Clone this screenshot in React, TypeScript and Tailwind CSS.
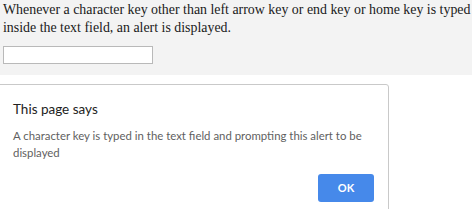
import React from "react";

export default function App() {
  return (
    <div className="relative w-[474px] h-[209px] bg-white overflow-hidden">
      <div className="w-[472px] h-[75px] bg-[#f3f3f3] pl-[3px] pt-[1px] [font-family:'Liberation_Serif',serif] text-[13.9px] leading-[18px] text-[#1a1a1a]">
        <p className="whitespace-nowrap">
          Whenever a character key other than left arrow key or end key or home key is typed
          <br />
          inside the text field, an alert is displayed.
        </p>
        <div className="mt-[9px] w-[150px] h-[18px] border border-[#b9b9b9] bg-white" />
      </div>
      <div className="absolute left-[-4px] top-[84px] w-[393px] h-[140px] bg-white border border-[#c9c9c9] rounded-[3px] pl-[16px] pt-[14px] [font-family:'Lato',sans-serif]">
        <div className="text-[13.5px] leading-[20px] text-[#222]">This page says</div>
        <div className="mt-[8px] text-[11.4px] leading-[17px] text-[#5f5f5f] pr-[10px]">
          A character key is typed in the text field and prompting this alert to be displayed
        </div>
        <div className="flex justify-end pr-[14px] mt-[13px]">
          <div className="w-[56px] h-[28px] rounded-[3px] bg-[#4689ea] text-white text-[11px] font-bold flex items-center justify-center">
            OK
          </div>
        </div>
      </div>
    </div>
  );
}
